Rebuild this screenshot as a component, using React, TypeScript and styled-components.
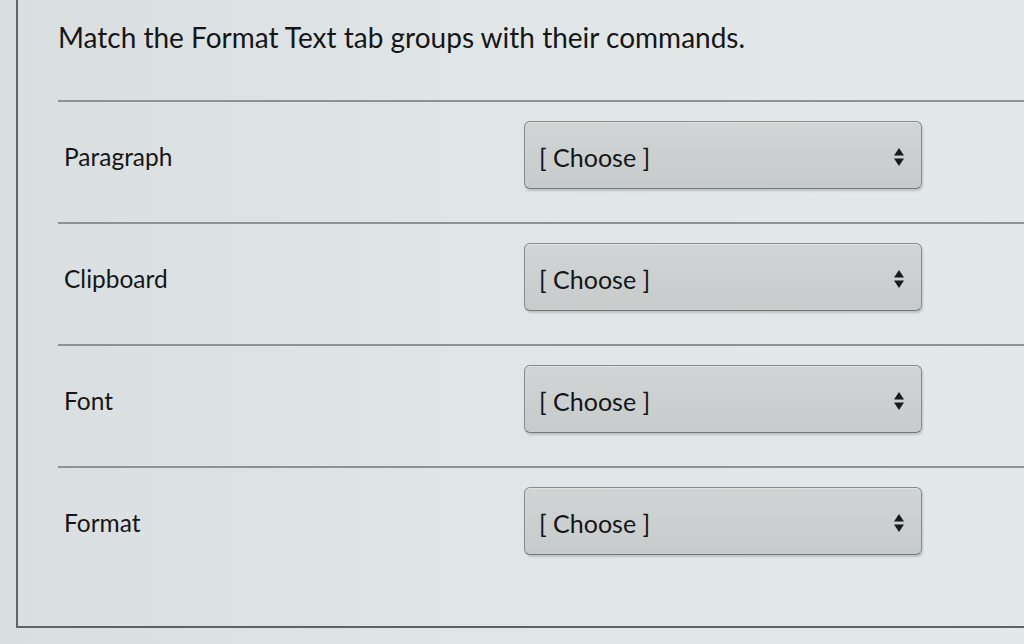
import React from "react";
import styled, { createGlobalStyle } from "styled-components";

const Global = createGlobalStyle`
  html, body {
    margin: 0;
    padding: 0;
    background: #dce2e3;
  }
  body {
    font-family: Lato, "Open Sans", "Liberation Sans", sans-serif;
    color: #1c1c1c;
  }
`;

const Page = styled.div`
  width: 1024px;
  height: 644px;
  overflow: hidden;
  background: linear-gradient(90deg, #d9dfe0 0%, #e0e6e7 45%, #e3e8e9 100%);
`;

const Card = styled.section`
  margin-left: 16px;
  height: 628px;
  border-left: 2px solid #5d6263;
  border-bottom: 2px solid #5d6263;
  box-sizing: border-box;
  padding-left: 40px;
  display: flex;
  flex-direction: column;
`;

const Title = styled.h1`
  margin: 0;
  height: 100px;
  padding-top: 20px;
  box-sizing: border-box;
  font-size: 28px;
  line-height: 34px;
  font-weight: 400;
  color: #161616;
`;

const Row = styled.div`
  height: 122px;
  border-top: 2px solid #8c9394;
  display: flex;
  align-items: center;
  box-sizing: border-box;
`;

const Label = styled.div`
  width: 460px;
  padding-left: 6px;
  padding-bottom: 11px;
  font-size: 24.5px;
  color: #161616;
`;

const Select = styled.div`
  width: 398px;
  height: 68px;
  box-sizing: border-box;
  margin-bottom: 14px;
  border: 1.5px solid #868c8d;
  border-bottom-color: #737879;
  border-radius: 6px;
  background: linear-gradient(180deg, #d1d5d6 0%, #cbcfd0 60%, #c7cbcc 100%);
  box-shadow: inset 0 1px 0 rgba(255, 255, 255, 0.35), 1px 2px 2px rgba(80, 90, 92, 0.25);
  display: flex;
  align-items: center;
  justify-content: space-between;
  padding: 4px 16px 0 14px;
`;

const Value = styled.span`
  font-size: 25px;
  color: #151515;
`;

const Arrows = styled.svg`
  width: 12px;
  height: 20px;
  display: block;
`;

const rows = ["Paragraph", "Clipboard", "Font", "Format"];

export default function App() {
  return (
    <>
      <Global />
      <Page>
        <Card>
          <Title>Match the Format Text tab groups with their commands.</Title>
          {rows.map((name) => (
            <Row key={name}>
              <Label>{name}</Label>
              <Select>
                <Value>[ Choose ]</Value>
                <Arrows viewBox="0 0 12 20">
                  <path d="M6 1 L11 8.5 L1 8.5 Z" fill="#1a1a1a" />
                  <path d="M1 11.5 L11 11.5 L6 19 Z" fill="#1a1a1a" />
                </Arrows>
              </Select>
            </Row>
          ))}
        </Card>
      </Page>
    </>
  );
}
